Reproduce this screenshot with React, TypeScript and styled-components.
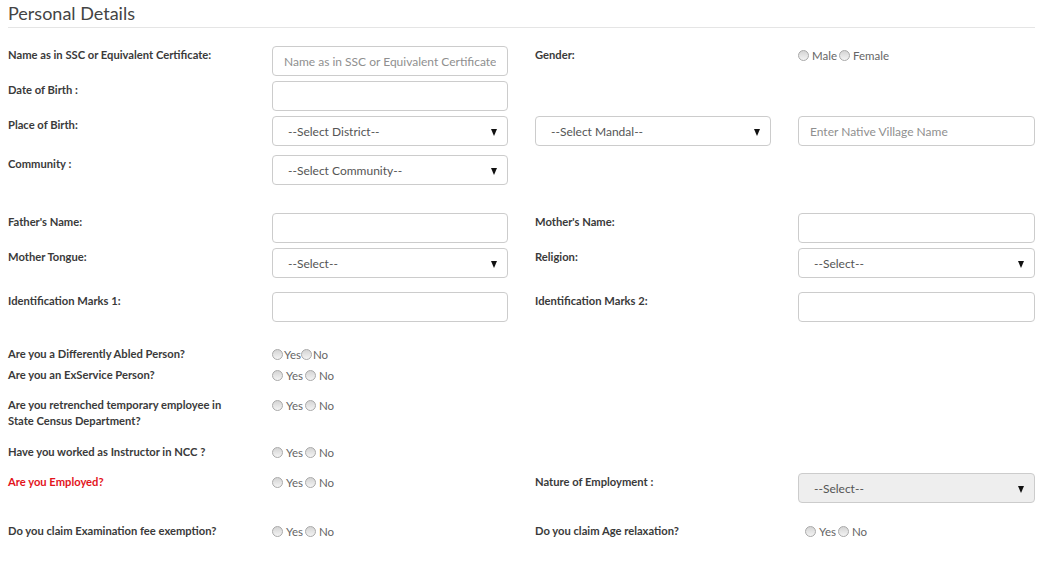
import React from 'react';
import styled, { createGlobalStyle } from 'styled-components';

const GlobalStyle = createGlobalStyle`
  body {
    margin: 0;
    background: #fff;
    font-family: Lato, "Open Sans", sans-serif;
  }
`;

const Page = styled.div`
  padding: 2px 6px 0 8px;
`;

const Heading = styled.h3`
  margin: 0 0 18px;
  padding-bottom: 3px;
  font-size: 18px;
  line-height: 22px;
  font-weight: 400;
  color: #444;
  border-bottom: 1px solid #e5e5e5;
`;

const Row = styled.div<{ $h: number }>`
  display: grid;
  grid-template-columns: 237px 236px 236px 237px;
  column-gap: 27px;
  align-items: start;
  height: ${p => p.$h}px;
`;

const Label = styled.div<{ $red?: boolean }>`
  padding-top: 1px;
  font-size: 11.2px;
  line-height: 16px;
  font-weight: 700;
  color: ${p => (p.$red ? '#e3131b' : '#3a3a3a')};
`;

const TextInput = styled.input`
  box-sizing: border-box;
  width: 100%;
  height: 30px;
  padding: 0 11px;
  border: 1px solid #ccc;
  border-radius: 4px;
  font-family: inherit;
  font-size: 12px;
  color: #555;
  outline: none;
  &::placeholder {
    color: #8f8f8f;
  }
`;

const SelectBox = styled.div<{ $disabled?: boolean }>`
  position: relative;
  box-sizing: border-box;
  height: 30px;
  padding-left: 15px;
  display: flex;
  align-items: center;
  border: 1px solid #ccc;
  border-radius: 4px;
  background: ${p => (p.$disabled ? '#eee' : '#fff')};
  font-size: 12px;
  color: #555;
`;

const Arrow = styled.span`
  position: absolute;
  right: 10px;
  top: 12px;
  width: 0;
  height: 0;
  border-left: 3.5px solid transparent;
  border-right: 3.5px solid transparent;
  border-top: 7px solid #111;
`;

const RadioGroup = styled.div<{ $tight?: boolean; $indent?: number }>`
  display: flex;
  align-items: center;
  padding-top: 1px;
  padding-left: ${p => p.$indent || 0}px;
  height: 16px;
  font-size: 11.5px;
  color: #666;
  gap: ${p => (p.$tight ? 0 : 2)}px;

  label {
    display: flex;
    align-items: center;
    gap: ${p => (p.$tight ? 1 : 3)}px;
  }
`;

const Radio = styled.input.attrs({ type: 'radio' })`
  appearance: none;
  margin: 0;
  width: 11px;
  height: 11px;
  border-radius: 50%;
  border: 1px solid #a9a9a9;
  background: linear-gradient(#d4d4d4, #f4f4f4);
  box-sizing: border-box;
`;

const Select = ({ text, disabled }: { text: string; disabled?: boolean }) => (
  <SelectBox $disabled={disabled}>
    {text}
    <Arrow />
  </SelectBox>
);

const Radios = ({
  name,
  options = ['Yes', 'No'],
  tight,
  indent,
}: {
  name: string;
  options?: string[];
  tight?: boolean;
  indent?: number;
}) => (
  <RadioGroup $tight={tight} $indent={indent}>
    {options.map(o => (
      <label key={o}>
        <Radio name={name} />
        {o}
      </label>
    ))}
  </RadioGroup>
);

export default function App() {
  return (
    <Page>
      <GlobalStyle />
      <Heading>Personal Details</Heading>

      <Row $h={35}>
        <Label>Name as in SSC or Equivalent Certificate:</Label>
        <TextInput placeholder="Name as in SSC or Equivalent Certificate" />
        <Label>Gender:</Label>
        <Radios name="gender" options={['Male', 'Female']} />
      </Row>
      <Row $h={35}>
        <Label>Date of Birth :</Label>
        <TextInput />
      </Row>
      <Row $h={39}>
        <Label>Place of Birth:</Label>
        <Select text="--Select District--" />
        <Select text="--Select Mandal--" />
        <TextInput placeholder="Enter Native Village Name" />
      </Row>
      <Row $h={58}>
        <Label>Community :</Label>
        <Select text="--Select Community--" />
      </Row>
      <Row $h={35}>
        <Label>Father's Name:</Label>
        <TextInput />
        <Label>Mother's Name:</Label>
        <TextInput />
      </Row>
      <Row $h={44}>
        <Label>Mother Tongue:</Label>
        <Select text="--Select--" />
        <Label>Religion:</Label>
        <Select text="--Select--" />
      </Row>
      <Row $h={53}>
        <Label>Identification Marks 1:</Label>
        <TextInput />
        <Label>Identification Marks 2:</Label>
        <TextInput />
      </Row>
      <Row $h={21}>
        <Label>Are you a Differently Abled Person?</Label>
        <Radios name="abled" tight />
      </Row>
      <Row $h={30}>
        <Label>Are you an ExService Person?</Label>
        <Radios name="exservice" />
      </Row>
      <Row $h={47}>
        <Label>
          Are you retrenched temporary employee in
          <br />
          State Census Department?
        </Label>
        <Radios name="census" />
      </Row>
      <Row $h={30}>
        <Label>Have you worked as Instructor in NCC ?</Label>
        <Radios name="ncc" />
      </Row>
      <Row $h={49}>
        <Label $red>Are you Employed?</Label>
        <Radios name="employed" />
        <Label>Nature of Employment :</Label>
        <Select text="--Select--" disabled />
      </Row>
      <Row $h={30}>
        <Label>Do you claim Examination fee exemption?</Label>
        <Radios name="feeexempt" />
        <Label>Do you claim Age relaxation?</Label>
        <Radios name="agerelax" indent={7} />
      </Row>
    </Page>
  );
}
